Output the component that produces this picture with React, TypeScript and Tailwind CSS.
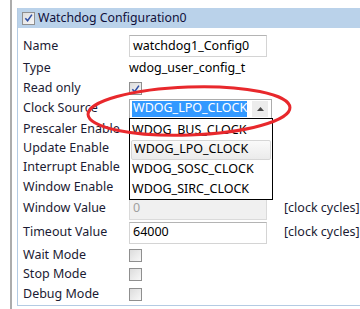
import React from 'react'

function CheckBox({ checked = false }: { checked?: boolean }) {
  return (
    <div className="w-[13px] h-[13px] border border-[#8f8f8f] bg-gradient-to-br from-[#dcdcdc] to-[#f8f8f8] p-[1px] flex items-center justify-center">
      {checked && (
        <svg width="10" height="10" viewBox="0 0 10 10">
          <path d="M1.5 5.2 L4 8 L8.8 1.2" fill="none" stroke="#2d4ea6" strokeWidth="1.7" />
        </svg>
      )}
    </div>
  )
}

function Row({ label, h, children }: { label: string; h: string; children?: React.ReactNode }) {
  return (
    <div className={`flex items-center ${h}`}>
      <div className="w-[106px] shrink-0 text-[#1b1b33] whitespace-nowrap">{label}</div>
      {children}
    </div>
  )
}

const options = ['WDOG_BUS_CLOCK', 'WDOG_LPO_CLOCK', 'WDOG_SOSC_CLOCK', 'WDOG_SIRC_CLOCK']

export default function App() {
  return (
    <div
      className="relative w-[360px] h-[309px] bg-white overflow-hidden flex text-[12.5px] leading-none"
      style={{ fontFamily: '"Noto Sans", "Liberation Sans", sans-serif' }}
    >
      <div className="ml-[10px] w-[2px] h-full bg-[#acacac]" />
      <div className="ml-[5px] mt-[8px] h-[298px] flex-1 border-l border-b border-[#b4cbe3] flex flex-col">
        {/* header */}
        <div className="h-[20px] bg-[#bad2ea] flex items-center pl-[4px] gap-[3px]">
          <CheckBox checked />
          <span className="text-[#10103a] text-[12.3px]">Watchdog Configuration0</span>
        </div>

        <div className="pl-[5px] pt-[6px] flex flex-col">
          <Row label="Name" h="h-[24px]">
            <div className="w-[138px] h-[22px] border border-[#d4d4d4] border-t-[#b4b4b4] flex items-center pl-[3px] text-black">
              watchdog1_Config0
            </div>
          </Row>
          <Row label="Type" h="h-[21px]">
            <span className="text-black">wdog_user_config_t</span>
          </Row>
          <Row label="Read only" h="h-[19px]">
            <CheckBox checked />
          </Row>
          <Row label="Clock Source" h="h-[21px]">
            <div className="w-[143px] h-[20px] border border-[#acacac] flex items-center pl-[2px] pr-[3px] bg-white">
              <div className="w-[115px] h-[16px] bg-[#3399ff] text-white flex items-center pl-[1px] whitespace-nowrap">WDOG_LPO_CLOCK</div>
              <div className="ml-auto w-[16px] h-[16px] bg-[#ececec] flex items-center justify-center">
                <svg width="7" height="4" viewBox="0 0 7 4">
                  <path d="M0 4 L3.5 0 L7 4 Z" fill="#4a4a4a" />
                </svg>
              </div>
            </div>
          </Row>
          <Row label="Prescaler Enable" h="h-[20px]" />
          <Row label="Update Enable" h="h-[19px]" />
          <Row label="Interrupt Enable" h="h-[19px]" />
          <Row label="Window Enable" h="h-[20px]" />
          <Row label="Window Value" h="h-[23px]">
            <div className="w-[138px] h-[22px] border border-[#dadada] bg-[#f0f0f0] flex items-center pl-[3px] text-[#a0a0a0]">0</div>
            <span className="ml-[17px] text-[#1b1b33] whitespace-nowrap">[clock cycles]</span>
          </Row>
          <Row label="Timeout Value" h="h-[25px]">
            <div className="w-[138px] h-[22px] border border-[#d4d4d4] border-t-[#b4b4b4] flex items-center pl-[3px] text-black">64000</div>
            <span className="ml-[17px] text-[#1b1b33] whitespace-nowrap">[clock cycles]</span>
          </Row>
          <Row label="Wait Mode" h="h-[20px]">
            <CheckBox />
          </Row>
          <Row label="Stop Mode" h="h-[19px]">
            <CheckBox />
          </Row>
          <Row label="Debug Mode" h="h-[20px]">
            <CheckBox />
          </Row>
        </div>
      </div>

      {/* open dropdown list */}
      <div className="absolute left-[129px] top-[118px] w-[144px] h-[82px] border border-black bg-white flex flex-col pt-[1px]">
        {options.map((o, i) => (
          <div
            key={o}
            className={`h-[20px] flex items-center pl-[2px] text-black whitespace-nowrap ${
              i === 1 ? 'mx-[1px] border border-[#d6d6d6] rounded-[2px] bg-gradient-to-b from-[#fafafa] to-[#ebebeb]' : ''
            }`}
          >
            {o}
          </div>
        ))}
      </div>

      {/* red annotation ellipse */}
      <svg className="absolute left-0 top-0 pointer-events-none" width="360" height="309">
        <ellipse cx="189" cy="111" rx="101" ry="24" fill="none" stroke="#e8282c" strokeWidth="3" transform="rotate(-2 189 111)" />
      </svg>
    </div>
  )
}
